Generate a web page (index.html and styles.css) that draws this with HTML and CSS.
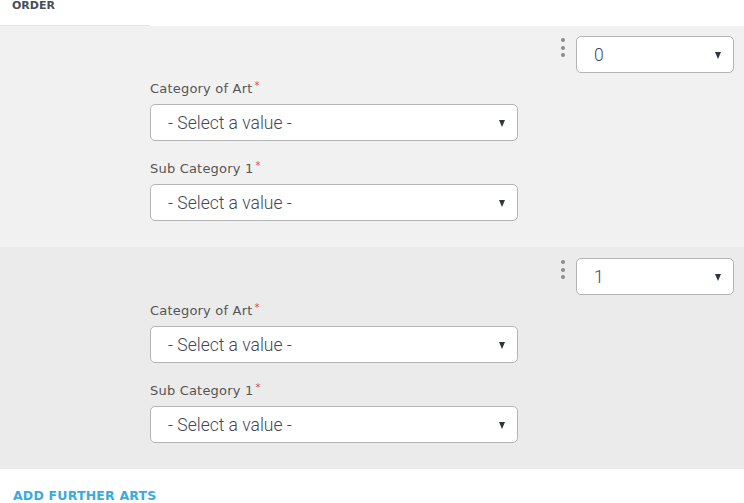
FILE: index.html
```html
<!DOCTYPE html>
<html lang="en">
<head>
<meta charset="utf-8">
<title>Order</title>
<link rel="stylesheet" href="styles.css">
</head>
<body>
<div class="order-head"><span class="order-label">ORDER</span></div>
<div class="items">
  <section class="item item-first">
    <div class="item-top">
      <span class="kebab"><i></i><i></i><i></i></span>
      <div class="select select-small"><span class="select-text">0</span><span class="caret"></span></div>
    </div>
    <div class="fields">
      <div class="field">
        <label class="field-label">Category of Art<span class="req">*</span></label>
        <div class="select"><span class="select-text">- Select a value -</span><span class="caret"></span></div>
      </div>
      <div class="field">
        <label class="field-label">Sub Category 1<span class="req">*</span></label>
        <div class="select"><span class="select-text">- Select a value -</span><span class="caret"></span></div>
      </div>
    </div>
  </section>
  <section class="item item-second">
    <div class="item-top">
      <span class="kebab"><i></i><i></i><i></i></span>
      <div class="select select-small"><span class="select-text">1</span><span class="caret"></span></div>
    </div>
    <div class="fields">
      <div class="field">
        <label class="field-label">Category of Art<span class="req">*</span></label>
        <div class="select"><span class="select-text">- Select a value -</span><span class="caret"></span></div>
      </div>
      <div class="field">
        <label class="field-label">Sub Category 1<span class="req">*</span></label>
        <div class="select"><span class="select-text">- Select a value -</span><span class="caret"></span></div>
      </div>
    </div>
  </section>
</div>
<a class="add-link" href="#">ADD FURTHER ARTS</a>
</body>
</html>
```

FILE: styles.css
```css
html, body {
  margin: 0;
  padding: 0;
  background: #ffffff;
  font-family: "DejaVu Sans", "Noto Sans", sans-serif;
  overflow: hidden;
}

.order-head {
  width: 150px;
  height: 25px;
  border-bottom: 1px solid #e4e4e4;
  overflow: hidden;
}

.order-label {
  display: block;
  padding-left: 12px;
  font-size: 11px;
  line-height: 12px;
  font-weight: bold;
  color: #454e5c;
}

.item {
  padding: 10px 10px 26px 150px;
  background: #f1f1f1;
}

.item-second {
  padding-top: 11px;
  background: #ebebeb;
}

.item-top {
  display: flex;
  justify-content: flex-end;
  align-items: flex-start;
  gap: 11px;
}

.kebab {
  display: flex;
  flex-direction: column;
  gap: 3.5px;
  padding-top: 2px;
}

.kebab i {
  display: block;
  width: 4px;
  height: 4px;
  border-radius: 50%;
  background: #8b8b8b;
}

.fields {
  display: flex;
  flex-direction: column;
  gap: 20px;
  margin-top: 8px;
  width: 368px;
}

.field {
  display: flex;
  flex-direction: column;
  gap: 7px;
}

.field-label {
  display: block;
  height: 16px;
  font-size: 13px;
  line-height: 16px;
  color: #555555;
  letter-spacing: 0.2px;
}

.req {
  position: relative;
  top: -4px;
  line-height: 0;
  color: #e0474c;
  font-size: 10px;
  margin-left: 2px;
}

.select {
  box-sizing: border-box;
  height: 37px;
  display: flex;
  align-items: center;
  justify-content: space-between;
  padding: 0 12px 0 17px;
  background: #ffffff;
  border: 1px solid #b4b4b4;
  border-radius: 5px;
}

.select-small {
  width: 158px;
}

.select-text {
  font-family: Roboto, "Noto Sans", sans-serif;
  font-weight: 300;
  font-size: 17.5px;
  color: #3f4757;
  padding-top: 1px;
}

.caret {
  width: 0;
  height: 0;
  border-left: 3.5px solid transparent;
  border-right: 3.5px solid transparent;
  border-top: 7px solid #2f3540;
  margin-top: 2px;
}

.add-link {
  display: block;
  margin-top: 20px;
  padding-left: 13px;
  font-size: 12.5px;
  line-height: 14px;
  font-weight: bold;
  letter-spacing: 0.2px;
  color: #38abe0;
  text-decoration: none;
}
```
